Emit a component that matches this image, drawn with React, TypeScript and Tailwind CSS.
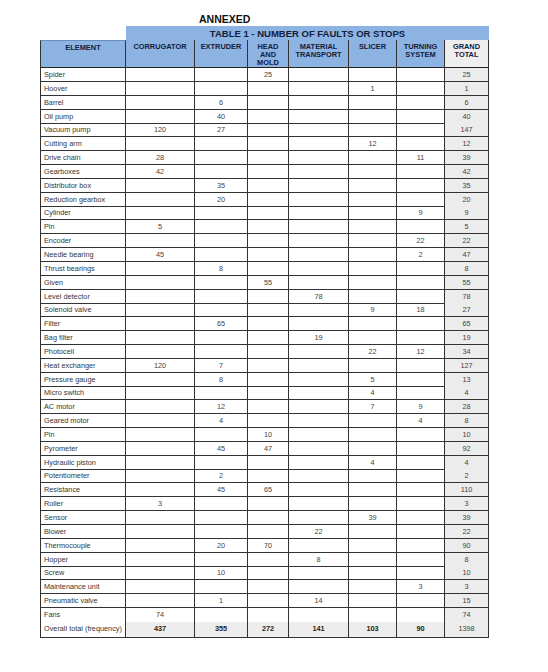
type Row = {
  name: string;
  values: (number | null)[];
  total: number;
};

const COLUMNS = [
  ["CORRUGATOR"],
  ["EXTRUDER"],
  ["HEAD", "AND", "MOLD"],
  ["MATERIAL", "TRANSPORT"],
  ["SLICER"],
  ["TURNING", "SYSTEM"],
];

// values: corrugator, extruder, head and mold, material transport, slicer, turning system
const ROWS: Row[] = [
  { name: "Spider", values: [null, null, 25, null, null, null], total: 25 },
  { name: "Hoover", values: [null, null, null, null, 1, null], total: 1 },
  { name: "Barrel", values: [null, 6, null, null, null, null], total: 6 },
  { name: "Oil pump", values: [null, 40, null, null, null, null], total: 40 },
  { name: "Vacuum pump", values: [120, 27, null, null, null, null], total: 147 },
  { name: "Cutting arm", values: [null, null, null, null, 12, null], total: 12 },
  { name: "Drive chain", values: [28, null, null, null, null, 11], total: 39 },
  { name: "Gearboxes", values: [42, null, null, null, null, null], total: 42 },
  { name: "Distributor box", values: [null, 35, null, null, null, null], total: 35 },
  { name: "Reduction gearbox", values: [null, 20, null, null, null, null], total: 20 },
  { name: "Cylinder", values: [null, null, null, null, null, 9], total: 9 },
  { name: "Pin", values: [5, null, null, null, null, null], total: 5 },
  { name: "Encoder", values: [null, null, null, null, null, 22], total: 22 },
  { name: "Needle bearing", values: [45, null, null, null, null, 2], total: 47 },
  { name: "Thrust bearings", values: [null, 8, null, null, null, null], total: 8 },
  { name: "Given", values: [null, null, 55, null, null, null], total: 55 },
  { name: "Level detector", values: [null, null, null, 78, null, null], total: 78 },
  { name: "Solenoid valve", values: [null, null, null, null, 9, 18], total: 27 },
  { name: "Filter", values: [null, 65, null, null, null, null], total: 65 },
  { name: "Bag filter", values: [null, null, null, 19, null, null], total: 19 },
  { name: "Photocell", values: [null, null, null, null, 22, 12], total: 34 },
  { name: "Heat exchanger", values: [120, 7, null, null, null, null], total: 127 },
  { name: "Pressure gauge", values: [null, 8, null, null, 5, null], total: 13 },
  { name: "Micro switch", values: [null, null, null, null, 4, null], total: 4 },
  { name: "AC motor", values: [null, 12, null, null, 7, 9], total: 28 },
  { name: "Geared motor", values: [null, 4, null, null, null, 4], total: 8 },
  { name: "Pin", values: [null, null, 10, null, null, null], total: 10 },
  { name: "Pyrometer", values: [null, 45, 47, null, null, null], total: 92 },
  { name: "Hydraulic piston", values: [null, null, null, null, 4, null], total: 4 },
  { name: "Potentiometer", values: [null, 2, null, null, null, null], total: 2 },
  { name: "Resistance", values: [null, 45, 65, null, null, null], total: 110 },
  { name: "Roller", values: [3, null, null, null, null, null], total: 3 },
  { name: "Sensor", values: [null, null, null, null, 39, null], total: 39 },
  { name: "Blower", values: [null, null, null, 22, null, null], total: 22 },
  { name: "Thermocouple", values: [null, 20, 70, null, null, null], total: 90 },
  { name: "Hopper", values: [null, null, null, 8, null, null], total: 8 },
  { name: "Screw", values: [null, 10, null, null, null, null], total: 10 },
  { name: "Maintenance unit", values: [null, null, null, null, null, 3], total: 3 },
  { name: "Pneumatic valve", values: [null, 1, null, 14, null, null], total: 15 },
  { name: "Fans", values: [74, null, null, null, null, null], total: 74 },
];

const OVERALL = [437, 355, 272, 141, 103, 90];

const GRID = "grid grid-cols-[86px_69px_53px_41px_60px_48px_48px_44px]";

export default function App() {
  return (
    <div
      className="min-h-[672px] w-[548px] bg-white pl-[40px] pt-[12px] text-[#3c3c3c]"
      style={{ fontFamily: '"Liberation Sans", Arial, sans-serif' }}
    >
      <div className="ml-[159px] h-[14px] text-[10.5px] font-bold leading-[14px] text-[#111]">
        ANNEXED
      </div>

      <div className="w-[449px]">
        {/* banner */}
        <div className={GRID}>
          <div />
          <div className="col-span-7 h-[14px] bg-[#8db3e2] text-center text-[9.5px] font-bold leading-[15px] text-[#14203a]">
            TABLE 1 - NUMBER OF FAULTS OR STOPS
          </div>
        </div>

        {/* column headers */}
        <div className={`${GRID} h-[28px] border-b border-[#222]`}>
          <div className="border-l border-t border-r border-[#333] border-t-[#6b8fbd] bg-[#8db3e2] pt-[3px] text-center text-[7.4px] font-bold leading-[8px] text-[#14203a]">
            ELEMENT
          </div>
          {COLUMNS.map((lines, i) => (
            <div
              key={i}
              className="border-r border-[#333] bg-[#8db3e2] pt-[3px] text-center text-[7.4px] font-bold leading-[8px] text-[#14203a]"
            >
              {lines.map((l) => (
                <div key={l}>{l}</div>
              ))}
            </div>
          ))}
          <div className="border-r border-[#333] bg-[#eeeeee] pt-[3px] text-center text-[7.4px] font-bold leading-[8px] text-[#14203a]">
            <div>GRAND</div>
            <div>TOTAL</div>
          </div>
        </div>

        {/* body */}
        {ROWS.map((row, r) => {
          const last = r === ROWS.length - 1;
          const bottom = last ? "" : "border-b border-[#333]";
          return (
            <div key={r} className={`${GRID} h-[13.85px]`}>
              <div
                className={`border-l border-r border-[#333] pl-[3px] text-[7.3px] leading-[13px] text-[#363636] ${bottom}`}
              >
                {row.name}
              </div>
              {row.values.map((v, i) => (
                <div
                  key={i}
                  className={`border-r border-[#333] text-center text-[7.3px] leading-[13px] text-[#444] ${bottom}`}
                >
                  {v ?? ""}
                </div>
              ))}
              <div
                className={`border-r border-[#333] bg-[#ececec] text-center text-[7.3px] leading-[13px] text-[#444] ${bottom}`}
              >
                {row.total}
              </div>
            </div>
          );
        })}

        <div className={`${GRID} h-[16px] border-b border-[#333]`}>
          <div className="border-l border-r border-[#333] pl-[3px] text-[7.3px] leading-[14px] text-[#363636]">
            Overall total (frequency)
          </div>
          {OVERALL.map((v, i) => (
            <div
              key={i}
              className="border-r border-[#333] bg-[#ededed] text-center text-[7.3px] font-bold leading-[14px] text-[#222]"
            >
              {v}
            </div>
          ))}
          <div className="border-r border-[#333] bg-[#ececec] text-center text-[7.3px] leading-[14px] text-[#444]">
            1398
          </div>
        </div>
      </div>
    </div>
  );
}
